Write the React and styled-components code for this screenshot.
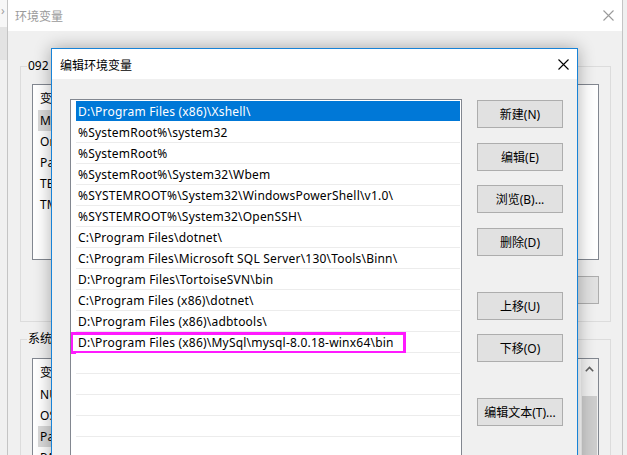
import React from "react";
import styled, { createGlobalStyle } from "styled-components";

const Global = createGlobalStyle`
  html, body { margin: 0; padding: 0; background: #f0f0f0; overflow: hidden; }
  * { box-sizing: border-box; }
  body { font-family: "Noto Sans", "Noto Sans CJK SC", sans-serif; font-size: 12px; color: #000; }
`;

const Desktop = styled.div`
  position: relative;
  width: 627px;
  height: 455px;
  overflow: hidden;
  background: #f0f0f0;
`;

/* window peeking at the far left */
const LeftWindow = styled.div`
  position: absolute;
  left: 0;
  top: 0;
  width: 8px;
  height: 455px;
  display: flex;
  flex-direction: column;
`;
const LeftTop = styled.div`
  height: 27px;
  background: #f7f7f7;
  color: #a0a0a0;
  font-size: 12px;
  line-height: 22px;
  padding-left: 1px;
`;
const LeftBand = styled.div`
  height: 33px;
  background: #e3e3e3;
`;
const LeftRest = styled.div`
  flex: 1;
  background: #f0f0f0;
`;

/* background "环境变量" window */
const BackWindow = styled.div`
  position: absolute;
  left: 7px;
  top: 0;
  width: 616px;
  height: 480px;
  border-left: 1px solid #c4c4c4;
  border-right: 1px solid #c4c4c4;
  background: #f0f0f0;
  display: flex;
  flex-direction: column;
`;
const TitleBar = styled.div`
  height: ${(p) => p.$h}px;
  background: #fff;
  display: flex;
  align-items: center;
  justify-content: space-between;
  padding-left: ${(p) => p.$pad}px;
  flex-shrink: 0;
`;
const TitleText = styled.span`
  font-family: "Noto Sans CJK SC", sans-serif;
  font-size: 12px;
  color: ${(p) => (p.$inactive ? "#9a9a9a" : "#000")};
`;
const CloseBtn = styled.div`
  width: ${(p) => p.$w}px;
  height: 100%;
  display: flex;
  align-items: center;
  justify-content: center;
`;
const BackBody = styled.div`
  padding: 0 11px 0 12px;
  display: flex;
  flex-direction: column;
`;
const GroupBox = styled.div`
  position: relative;
  margin-top: ${(p) => p.$mt}px;
  border: 1px solid #dcdcdc;
  padding: ${(p) => p.$pt}px 11px 17px 11px;
  display: flex;
  flex-direction: column;
`;
const Legend = styled.span`
  position: absolute;
  top: -9px;
  left: 6px;
  padding: 0 1px;
  background: #f0f0f0;
  line-height: 16px;
  font-size: 12px;
`;
const BackList = styled.div`
  height: ${(p) => p.$h}px;
  border: 1px solid #828790;
  background: #fff;
  display: flex;
  overflow: hidden;
`;
const BackListInner = styled.div`
  flex: 1;
  padding-left: 5px;
  display: flex;
  flex-direction: column;
`;
const HeaderRow = styled.div`
  height: 25px;
  display: flex;
  align-items: center;
  padding-left: 2px;
  font-family: "Noto Sans CJK SC", sans-serif;
`;
const BackRow = styled.div`
  height: 21px;
  display: flex;
  align-items: center;
  padding-left: 2px;
  width: 200px;
  letter-spacing: 0.2px;
  background: ${(p) => (p.$sel ? "#d9d9d9" : "transparent")};
`;
const ScrollBar = styled.div`
  width: 17px;
  background: #f0f0f0;
  display: flex;
  flex-direction: column;
  align-items: center;
`;
const ScrollArrow = styled.div`
  height: 20px;
  display: flex;
  align-items: center;
  justify-content: center;
`;
const ScrollThumb = styled.div`
  margin-top: 17px;
  width: 15px;
  flex: 1;
  background: #cdcdcd;
`;
const BtnRow = styled.div`
  margin-top: 16px;
  display: flex;
  justify-content: flex-end;
  gap: 8px;
`;

/* edit dialog */
const Dialog = styled.div`
  position: absolute;
  left: 51px;
  top: 48px;
  width: 527px;
  height: 430px;
  border: 1px solid #1883d7;
  background: #f0f0f0;
  box-shadow: 0 0 16px rgba(0, 0, 0, 0.32);
  display: flex;
  flex-direction: column;
`;
const DialogBody = styled.div`
  display: flex;
  gap: 15px;
  padding: 20px 14px 0 18px;
`;
const PathList = styled.div`
  width: 392px;
  height: 380px;
  border: 1px solid #828790;
  background: #fff;
  padding: 1px 1px 0 5px;
  display: flex;
  flex-direction: column;
  overflow: hidden;
`;
const PathRow = styled.div`
  position: relative;
  height: 21px;
  flex-shrink: 0;
  border-bottom: 1px solid #ececec;
  padding-left: 2px;
  display: flex;
  align-items: center;
  white-space: nowrap;
  letter-spacing: 0.21px;
  background: ${(p) => (p.$sel ? "#0078d7" : "#fff")};
  color: ${(p) => (p.$sel ? "#fff" : "#000")};
  border-bottom-color: ${(p) => (p.$sel ? "#fff" : "#ececec")};
`;
const Highlight = styled.div`
  position: absolute;
  left: -6px;
  top: 0px;
  width: 336px;
  height: 22px;
  border: 3px solid #ff1aff;
  pointer-events: none;
`;
const BtnColumn = styled.div`
  display: flex;
  flex-direction: column;
  padding-top: 1px;
`;
const Button = styled.div`
  width: ${(p) => p.$w || 86}px;
  height: 28px;
  margin-top: ${(p) => p.$mt || 0}px;
  background: #e1e1e1;
  border: 1px solid #adadad;
  display: flex;
  align-items: center;
  justify-content: center;
  font-size: 12px;
  white-space: nowrap;
  flex-shrink: 0;
`;

const XIcon = ({ color }) => (
  <svg width="11" height="11" viewBox="0 0 11 11">
    <path d="M0.5 0.5 L10.5 10.5 M10.5 0.5 L0.5 10.5" stroke={color} strokeWidth="1.1" fill="none" />
  </svg>
);

const Chevron = () => (
  <svg width="9" height="6" viewBox="0 0 9 6">
    <path d="M0.8 5.2 L4.5 1.5 L8.2 5.2" stroke="#606060" strokeWidth="1.6" fill="none" />
  </svg>
);

const paths = [
  "D:\\Program Files (x86)\\Xshell\\",
  "%SystemRoot%\\system32",
  "%SystemRoot%",
  "%SystemRoot%\\System32\\Wbem",
  "%SYSTEMROOT%\\System32\\WindowsPowerShell\\v1.0\\",
  "%SYSTEMROOT%\\System32\\OpenSSH\\",
  "C:\\Program Files\\dotnet\\",
  "C:\\Program Files\\Microsoft SQL Server\\130\\Tools\\Binn\\",
  "D:\\Program Files\\TortoiseSVN\\bin",
  "C:\\Program Files (x86)\\dotnet\\",
  "D:\\Program Files (x86)\\adbtools\\",
  "D:\\Program Files (x86)\\MySql\\mysql-8.0.18-winx64\\bin",
  "", "", "", "", "", "",
];

const buttons = [
  { label: "新建(N)", mt: 0 },
  { label: "编辑(E)", mt: 15 },
  { label: "浏览(B)...", mt: 14 },
  { label: "删除(D)", mt: 15 },
  { label: "上移(U)", mt: 36 },
  { label: "下移(O)", mt: 14 },
  { label: "编辑文本(T)...", mt: 36 },
];

export default function App() {
  return (
    <>
      <Global />
      <Desktop>
        <LeftWindow>
          <LeftTop>›</LeftTop>
          <LeftBand />
          <LeftRest />
        </LeftWindow>

        <BackWindow>
          <TitleBar $h={31} $pad={7}>
            <TitleText $inactive>环境变量</TitleText>
            <CloseBtn $w={27}>
              <XIcon color="#9a9a9a" />
            </CloseBtn>
          </TitleBar>
          <BackBody>
            <GroupBox $mt={35} $pt={17}>
              <Legend>092 的用户变量(U)</Legend>
              <BackList $h={176}>
                <BackListInner>
                  <HeaderRow>变量</HeaderRow>
                  <BackRow $sel>MOZ_PLUGIN_PATH</BackRow>
                  <BackRow>OneDrive</BackRow>
                  <BackRow>Path</BackRow>
                  <BackRow>TEMP</BackRow>
                  <BackRow>TMP</BackRow>
                </BackListInner>
              </BackList>
              <BtnRow>
                <Button $w={86}>新建(N)...</Button>
                <Button $w={86}>编辑(E)...</Button>
                <Button $w={86}>删除(D)</Button>
              </BtnRow>
            </GroupBox>
            <GroupBox $mt={17} $pt={18}>
              <Legend>系统变量(S)</Legend>
              <BackList $h={200}>
                <BackListInner>
                  <HeaderRow>变量</HeaderRow>
                  <BackRow>NUMBER_OF_PROCESSORS</BackRow>
                  <BackRow>OS</BackRow>
                  <BackRow $sel>Path</BackRow>
                  <BackRow>PATHEXT</BackRow>
                </BackListInner>
                <ScrollBar>
                  <ScrollArrow>
                    <Chevron />
                  </ScrollArrow>
                  <ScrollThumb />
                </ScrollBar>
              </BackList>
            </GroupBox>
          </BackBody>
        </BackWindow>

        <Dialog>
          <TitleBar $h={30} $pad={8}>
            <TitleText>编辑环境变量</TitleText>
            <CloseBtn $w={28}>
              <XIcon color="#000" />
            </CloseBtn>
          </TitleBar>
          <DialogBody>
            <PathList>
              {paths.map((p, i) => (
                <PathRow key={i} $sel={i === 0}>
                  {p}
                  {i === 11 && <Highlight />}
                </PathRow>
              ))}
            </PathList>
            <BtnColumn>
              {buttons.map((b) => (
                <Button key={b.label} $mt={b.mt}>
                  {b.label}
                </Button>
              ))}
            </BtnColumn>
          </DialogBody>
        </Dialog>
      </Desktop>
    </>
  );
}
